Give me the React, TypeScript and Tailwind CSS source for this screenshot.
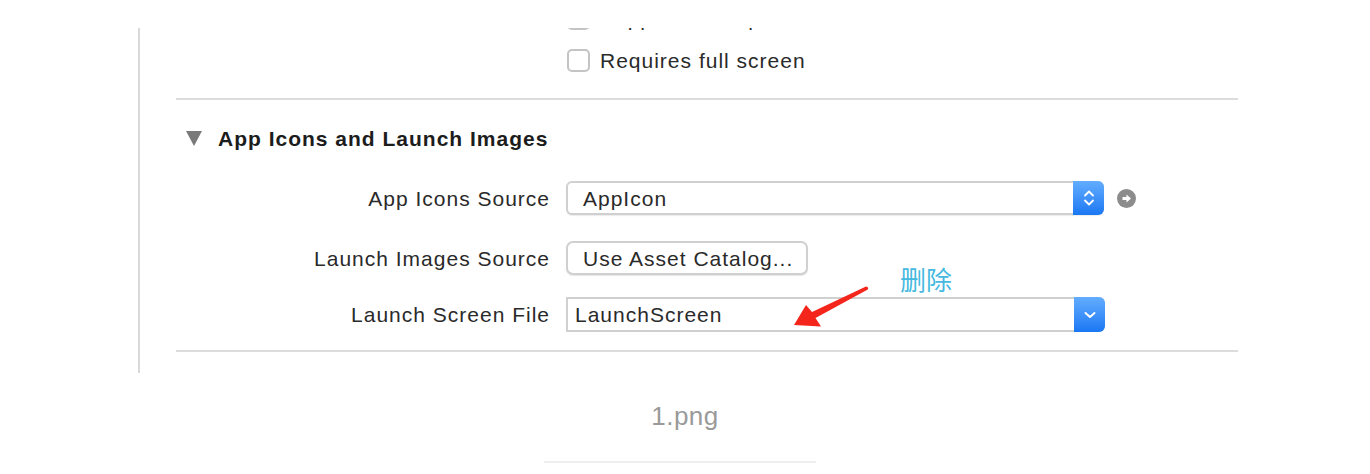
import React from "react";

const sans = { fontFamily: '"Liberation Sans", Arial, sans-serif' };

function Checkbox() {
  return <div className="w-[23px] h-[23px] rounded-[5px] border-2 border-[#c4c4c4] bg-white shrink-0" />;
}

function Stepper({ updown }: { updown: boolean }) {
  return (
    <div className="w-[31px] self-stretch -my-[2px] -mr-[2px] rounded-r-[6px] bg-gradient-to-b from-[#62adff] to-[#1877f2] flex items-center justify-center">
      {updown ? (
        <svg width="12" height="20" viewBox="0 0 12 20" fill="none" stroke="white" strokeWidth="1.8" strokeLinecap="round" strokeLinejoin="round">
          <path d="M2 7.5 6 3.5 10 7.5" />
          <path d="M2 12.5 6 16.5 10 12.5" />
        </svg>
      ) : (
        <svg width="14" height="10" viewBox="0 0 14 10" fill="none" stroke="white" strokeWidth="2" strokeLinecap="round" strokeLinejoin="round">
          <path d="M2.5 3 7 7 11.5 3" />
        </svg>
      )}
    </div>
  );
}

function Row({ label, children }: { label: string; children: React.ReactNode }) {
  return (
    <div className="flex items-center gap-[16px]">
      <div className="w-[374px] text-right text-[21px] tracking-[1px] text-[#2a2a2a] leading-none">{label}</div>
      {children}
    </div>
  );
}

export default function App() {
  return (
    <div className="w-[1370px] h-[474px] bg-white overflow-hidden" style={sans}>
      <div className="pt-[28px] pl-[138px]">
        <div className="relative w-[1100px] h-[345px] border-l-2 border-[#d9d9d9] pl-[36px] overflow-hidden">
          {/* checkbox options, first one cut off by the crop */}
          <div className="-mt-[21px] pl-[391px] flex flex-col gap-[19px]">
            <div className="flex items-center gap-[10px] h-[23px]">
              <Checkbox />
              <span className="text-[21px] tracking-[1px] text-[#2a2a2a] leading-none">Supports multiple windows</span>
            </div>
            <div className="flex items-center gap-[10px] h-[23px]">
              <Checkbox />
              <span className="text-[21px] tracking-[1px] text-[#2a2a2a] leading-none">Requires full screen</span>
            </div>
          </div>

          <div className="mt-[26px] w-[1062px] h-[2px] bg-[#dcdcdc]" />

          {/* section header */}
          <div className="mt-[30px] flex items-center gap-[16px] pl-[10px] h-[16px]">
            <svg width="16" height="15" viewBox="0 0 16 15">
              <path d="M0 0H16L8 15Z" fill="#7a7a7a" />
            </svg>
            <span className="text-[21px] tracking-[1px] font-bold text-[#1c1c1c] leading-none">App Icons and Launch Images</span>
          </div>

          <div className="mt-[35px] flex flex-col">
            <Row label="App Icons Source">
              <div className="flex items-center gap-[13px]">
                <div className="w-[538px] h-[34px] rounded-[6px] border-2 border-[#d0d0d0] bg-white shadow-[0_1px_1px_rgba(0,0,0,0.08)] flex items-center">
                  <span className="flex-1 pl-[15px] text-[21px] tracking-[1px] text-[#2a2a2a] leading-none">AppIcon</span>
                  <Stepper updown />
                </div>
                <div className="w-[19px] h-[19px] rounded-full bg-[#8c8c8c] flex items-center justify-center">
                  <svg width="11" height="11" viewBox="0 0 11 11" fill="white">
                    <path d="M1.5 4H5.5V1.5L10 5.5 5.5 9.5V7H1.5Z" />
                  </svg>
                </div>
              </div>
            </Row>

            <div className="mt-[26px]">
              <Row label="Launch Images Source">
                <div className="w-[242px] h-[34px] rounded-[7px] border-2 border-[#d0d0d0] bg-white shadow-[0_1px_1px_rgba(0,0,0,0.1)] flex items-center pl-[15px]">
                  <span className="text-[21px] tracking-[1px] text-[#2a2a2a] leading-none">Use Asset Catalog...</span>
                </div>
              </Row>
            </div>

            <div className="mt-[22px]">
              <Row label="Launch Screen File">
                <div className="w-[539px] h-[35px] rounded-r-[6px] border-2 border-[#d0d0d0] bg-white flex items-center">
                  <span className="flex-1 pl-[7px] text-[21px] tracking-[1px] text-[#2a2a2a] leading-none">LaunchScreen</span>
                  <Stepper updown={false} />
                </div>
              </Row>
            </div>
          </div>

          <div className="mt-[18px] w-[1062px] h-[2px] bg-[#dcdcdc]" />

          {/* annotation */}
          <svg className="absolute left-[640px] top-[252px]" width="100" height="60" viewBox="0 0 100 60">
            <path d="M14 45 L26 25 L32 32 L86 6.5 Q89 7 87.8 9.6 L35.5 38 L41 46.5 Z" fill="#f4261c" />
          </svg>
          <span
            className="absolute left-[760px] top-[238px] text-[26px] leading-none text-[#45b9e0]"
            style={{ fontFamily: '"Noto Sans CJK SC", sans-serif' }}
          >
            删除
          </span>
        </div>

        <div className="mt-[30px] -ml-[138px] flex flex-col items-center">
          <span className="text-[26px] tracking-[0.5px] text-[#9a9a9a] leading-none">1.png</span>
          <div className="mt-[32px] w-[272px] h-[2px] bg-[#eeeeee] -ml-[10px]" />
        </div>
      </div>
    </div>
  );
}
